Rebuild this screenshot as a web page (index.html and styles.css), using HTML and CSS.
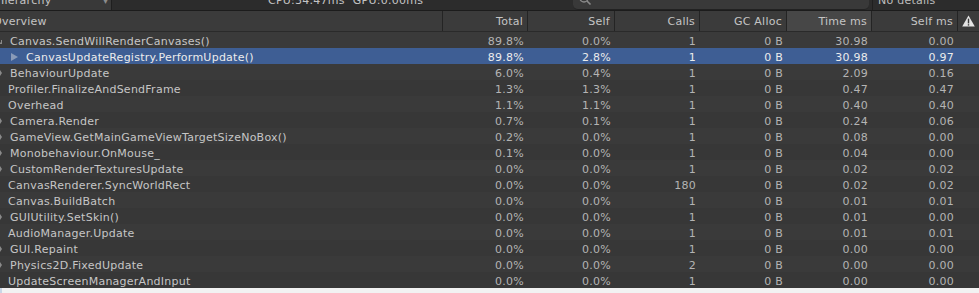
FILE: index.html
```html
<!DOCTYPE html>
<html lang="en">
<head>
    <meta charset="UTF-8">
    <title>Profiler - Hierarchy</title>
    <link rel="stylesheet" href="styles.css">
</head>
<body>
    <div class="toolbar">
        <div class="toolbar-inner">
            <div class="dropdown"><span class="dd-label">Hierarchy</span><span class="dd-arrow">&#9662;</span></div>
            <div class="frame-info"><span>CPU:34.47ms</span><span>GPU:0.00ms</span></div>
            <div class="search">
                <svg class="search-icon" width="14" height="14" viewBox="0 0 14 14"><circle cx="6" cy="6" r="4" fill="none" stroke="#8a8a8a" stroke-width="1.4"/><path d="M9 9 L12.5 12.5" stroke="#8a8a8a" stroke-width="1.6"/></svg>
            </div>
            <div class="details">No details</div>
        </div>
    </div>

    <div class="head">
        <div class="col name-col">Overview</div>
        <div class="col">Total</div>
        <div class="col">Self</div>
        <div class="col">Calls</div>
        <div class="col">GC Alloc</div>
        <div class="col sorted">Time ms</div>
        <div class="col">Self ms</div>
        <div class="col warn">
            <svg width="13" height="12" viewBox="0 0 13 12"><path d="M6.5 0.5 L12.8 11.6 L0.2 11.6 Z" fill="#e4e4e4"/><rect x="5.8" y="3.6" width="1.4" height="4.8" fill="#3a3a3a"/><rect x="5.8" y="9.2" width="1.4" height="1.4" fill="#3a3a3a"/></svg>
        </div>
    </div>

    <div class="rows" id="rows"></div>
    <div class="footer"></div>

    <script>
        // name, total, self, calls, gc, time, selfms, kind
        // kind: "open" = expanded parent, "kids" = collapsed parent, "sel" = selected child, "" = leaf
        const data = [
            ["Canvas.SendWillRenderCanvases()", "89.8%", "0.0%", "1", "0 B", "30.98", "0.00", "open"],
            ["CanvasUpdateRegistry.PerformUpdate()", "89.8%", "2.8%", "1", "0 B", "30.98", "0.97", "sel"],
            ["BehaviourUpdate", "6.0%", "0.4%", "1", "0 B", "2.09", "0.16", "kids"],
            ["Profiler.FinalizeAndSendFrame", "1.3%", "1.3%", "1", "0 B", "0.47", "0.47", ""],
            ["Overhead", "1.1%", "1.1%", "1", "0 B", "0.40", "0.40", ""],
            ["Camera.Render", "0.7%", "0.1%", "1", "0 B", "0.24", "0.06", "kids"],
            ["GameView.GetMainGameViewTargetSizeNoBox()", "0.2%", "0.0%", "1", "0 B", "0.08", "0.00", "kids"],
            ["Monobehaviour.OnMouse_", "0.1%", "0.0%", "1", "0 B", "0.04", "0.00", "kids"],
            ["CustomRenderTexturesUpdate", "0.0%", "0.0%", "1", "0 B", "0.02", "0.02", "kids"],
            ["CanvasRenderer.SyncWorldRect", "0.0%", "0.0%", "180", "0 B", "0.02", "0.02", ""],
            ["Canvas.BuildBatch", "0.0%", "0.0%", "1", "0 B", "0.01", "0.01", ""],
            ["GUIUtility.SetSkin()", "0.0%", "0.0%", "1", "0 B", "0.01", "0.00", "kids"],
            ["AudioManager.Update", "0.0%", "0.0%", "1", "0 B", "0.01", "0.01", ""],
            ["GUI.Repaint", "0.0%", "0.0%", "1", "0 B", "0.00", "0.00", "kids"],
            ["Physics2D.FixedUpdate", "0.0%", "0.0%", "2", "0 B", "0.00", "0.00", "kids"],
            ["UpdateScreenManagerAndInput", "0.0%", "0.0%", "1", "0 B", "0.00", "0.00", ""]
        ];

        const rows = document.getElementById("rows");
        data.forEach((d, i) => {
            const row = document.createElement("div");
            row.className = "row" + (i % 2 ? " odd" : "") + (d[7] ? " " + d[7] : "");
            let html = `<div class="cell name"><span class="fold"></span>${d[0]}</div>`;
            for (let c = 1; c < 7; c++) {
                html += `<div class="cell num">${d[c]}</div>`;
            }
            html += `<div class="cell"></div>`;
            row.innerHTML = html;
            rows.appendChild(row);
        });
    </script>
</body>
</html>
```

FILE: styles.css
```css
body {
    margin: 0;
    background: #f2f2f2;
    font-family: "DejaVu Sans", Verdana, sans-serif;
    font-size: 11px;
    letter-spacing: 0.25px;
    color: #c4c4c4;
    width: 979px;
    overflow: hidden;
}

/* cut-off toolbar at the very top */
.toolbar {
    height: 10px;
    overflow: hidden;
    background: #2c2c2c;
    border-bottom: 1px solid #1c1c1c;
}
.toolbar-inner {
    display: flex;
    height: 18px;
    margin-top: -8px;
    line-height: 18px;
}
.dropdown {
    width: 111px;
    display: flex;
    justify-content: space-between;
    background: #393939;
    border-right: 1px solid #1f1f1f;
    flex-shrink: 0;
}
.dd-label {
    margin-left: -4px;
}
.dd-arrow {
    margin-right: 3px;
    color: #8c8c8c;
    font-size: 9px;
}
.frame-info {
    margin-left: 156px;
    display: flex;
    gap: 8px;
    width: 305px;
    flex-shrink: 0;
}
.search {
    width: 296px;
    background: #393939;
    border-radius: 0 0 5px 5px;
    border-bottom: 1px solid #222;
    flex-shrink: 0;
}
.search-icon {
    margin: 0 0 0 5px;
    vertical-align: -2px;
}
.details {
    margin-left: 3px;
    padding-left: 5px;
    border-left: 1px solid #1f1f1f;
    color: #bcbcbc;
}

/* column header */
.head, .row {
    display: grid;
    grid-template-columns: 443px 85px 87px 85px 87px 85px 86px 21px;
}
.head {
    height: 20px;
    line-height: 22px;
    background: #3b3b3b;
    border-bottom: 1px solid #2a2a2a;
}
.col {
    text-align: right;
    padding-right: 4px;
    border-right: 1px solid #242424;
    white-space: nowrap;
    overflow: hidden;
}
.col.name-col {
    text-align: left;
    text-indent: -7px;
}
.col.sorted {
    background: #474747;
}
.col.warn {
    border-right: none;
    padding: 0;
    display: flex;
    align-items: center;
    justify-content: center;
}

/* table body */
.row {
    height: 16px;
    line-height: 20px;
    background: #3a3a3a;
}
.row.odd {
    background: #373737;
}
.cell {
    white-space: nowrap;
}
.cell.name {
    padding-left: 8px;
    color: #c6c6c6;
}
.cell.num {
    text-align: right;
    padding-right: 4px;
    color: #b4b4b4;
}
.fold {
    display: none;
}
.row.kids .cell.name,
.row.open .cell.name {
    padding-left: 10px;
}
.row.kids .fold {
    display: inline-block;
    width: 0;
    height: 0;
    border-left: 2px solid #8a8a8a;
    border-top: 3px solid transparent;
    border-bottom: 3px solid transparent;
    margin-left: -10px;
    margin-right: 8px;
    vertical-align: 1px;
}
.row.open .fold {
    display: inline-block;
    width: 2px;
    height: 5px;
    background: linear-gradient(to bottom right, transparent 45%, #8a8a8a 50%);
    margin-left: -10px;
    margin-right: 8px;
    vertical-align: 1px;
}
.row.sel {
    background: #3e5e94;
}
.row.sel .cell {
    color: #ececec;
}
.row.sel .cell.name {
    padding-left: 11px;
}
.row.sel .fold {
    display: inline-block;
    width: 0;
    height: 0;
    border-left: 7px solid #8a9bb8;
    border-top: 4px solid transparent;
    border-bottom: 4px solid transparent;
    margin-right: 8px;
    vertical-align: 0px;
}

.footer {
    height: 5px;
    border-left: 2px solid #c9d6e7;
}
```
